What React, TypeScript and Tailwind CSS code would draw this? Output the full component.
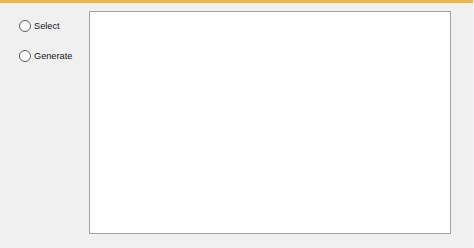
import React from "react";

function Radio({ label }: { label: string }) {
  return (
    <div className="flex items-center h-[14px]">
      <span className="w-[12px] h-[12px] rounded-full border border-[#5a5a5a] bg-white box-border shrink-0" />
      <span className="ml-[3px] text-[9.2px] leading-[14px] text-[#141414]">{label}</span>
    </div>
  );
}

export default function App() {
  return (
    <div
      className="w-[474px] h-[248px] bg-[#f0f0f0] flex flex-col overflow-hidden border-r border-[#f7f7f7]"
      style={{ fontFamily: '"Liberation Sans", Arial, sans-serif' }}
    >
      <div className="h-[3px] bg-[#e9b650] shrink-0" />
      <div className="flex pt-[8px]">
        <div className="w-[89px] pl-[19px] pt-[8px] flex flex-col gap-[16px]">
          <Radio label="Select" />
          <Radio label="Generate" />
        </div>
        <div className="w-[362px] h-[223px] bg-white border border-[#a0a0a0]" />
      </div>
    </div>
  );
}
